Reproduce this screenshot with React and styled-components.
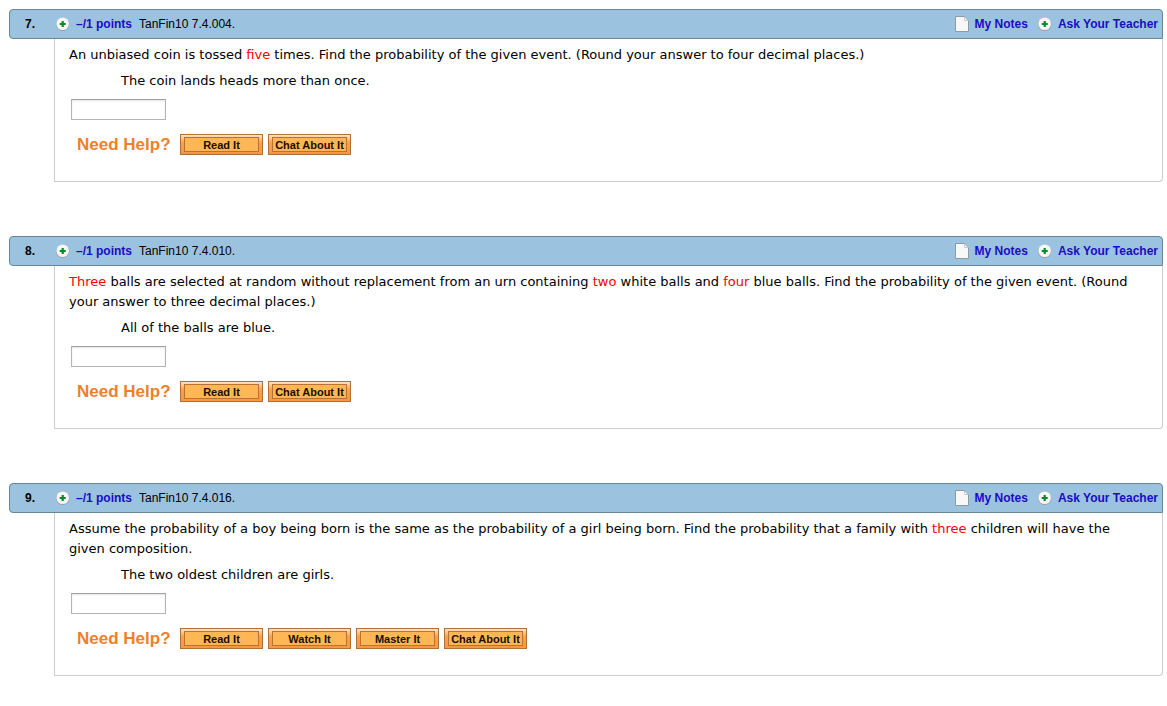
import React from "react";
import styled, { createGlobalStyle } from "styled-components";

const Value = styled.span`
  color: #f00;
`;

const questions = [
  {
    number: 7,
    code: "TanFin10 7.4.004.",
    text: (
      <>
        An unbiased coin is tossed <Value>five</Value> times. Find the
        probability of the given event. (Round your answer to four decimal
        places.)
      </>
    ),
    event: "The coin lands heads more than once.",
    help: ["Read It", "Chat About It"],
  },
  {
    number: 8,
    code: "TanFin10 7.4.010.",
    text: (
      <>
        <Value>Three</Value> balls are selected at random without replacement
        from an urn containing <Value>two</Value> white balls and{" "}
        <Value>four</Value> blue balls. Find the probability of the given event.
        (Round your answer to three decimal places.)
      </>
    ),
    event: "All of the balls are blue.",
    help: ["Read It", "Chat About It"],
  },
  {
    number: 9,
    code: "TanFin10 7.4.016.",
    text: (
      <>
        Assume the probability of a boy being born is the same as the
        probability of a girl being born. Find the probability that a family
        with <Value>three</Value> children will have the given composition.
      </>
    ),
    event: "The two oldest children are girls.",
    help: ["Read It", "Watch It", "Master It", "Chat About It"],
  },
];

function PlusIcon() {
  return (
    <svg width="14" height="14" viewBox="0 0 14 14" aria-hidden="true">
      <circle cx="6.7" cy="7.3" r="6.6" fill="#8fa0ac" />
      <circle cx="6.7" cy="6.8" r="6.3" fill="#f6f6f4" />
      <path
        d="M5.6 4h2.2v1.9h1.9v2.2H7.8V10H5.6V8.1H3.7V5.9h1.9z"
        fill="#078a28"
      />
    </svg>
  );
}

function NoteIcon() {
  return (
    <svg width="14" height="16" viewBox="0 0 14 16" aria-hidden="true">
      <path
        d="M0.5 0.5h9l4 4v11h-13z"
        fill="#f8f8f8"
        stroke="#8b9ba6"
        strokeWidth="1"
      />
      <path d="M9.5 1v3.5h3.5z" fill="#fff" stroke="#c4cace" strokeWidth="1" />
    </svg>
  );
}

function Question({ number, code, text, event, help }) {
  const answerId = `answer-${number}`;
  return (
    <Card>
      <Header>
        <QuestionNumber>{number}.</QuestionNumber>
        <Points href="#points">
          <PlusIcon />
          –/1 points
        </Points>
        <span>{code}</span>
        <Links>
          <HeaderLink href="#notes">
            <NoteIcon />
            My Notes
          </HeaderLink>
          <HeaderLink href="#ask">
            <PlusIcon />
            Ask Your Teacher
          </HeaderLink>
        </Links>
      </Header>
      <Body>
        <Text>{text}</Text>
        <EventLabel htmlFor={answerId}>{event}</EventLabel>
        <Answer id={answerId} type="text" />
        <Help>
          <HelpTitle>Need Help?</HelpTitle>
          {help.map((name) => (
            <HelpButton key={name} type="button">
              <HelpButtonText>{name}</HelpButtonText>
            </HelpButton>
          ))}
        </Help>
      </Body>
    </Card>
  );
}

export default function App() {
  return (
    <>
      <GlobalStyle />
      <Page>
        {questions.map((question) => (
          <Question key={question.number} {...question} />
        ))}
      </Page>
    </>
  );
}

const GlobalStyle = createGlobalStyle`
  * {
    box-sizing: border-box;
  }

  body {
    margin: 0;
    background-color: #fff;
    color: #000;
    font-family: Verdana, "DejaVu Sans", sans-serif;
    font-size: 13px;
  }
`;

const Page = styled.main`
  display: flex;
  flex-direction: column;
  gap: 54px;
  padding: 9px 4px 30px 9px;
`;

const Card = styled.section``;

const Header = styled.header`
  display: flex;
  align-items: center;
  height: 30px;
  padding: 0 4px 0 15px;
  border: 1px solid #668796;
  border-radius: 4px 4px 0 4px;
  background-color: #9bc2de;
  font-family: "Liberation Sans", Arial, sans-serif;
  font-size: 12px;
  line-height: 16px;
`;

const QuestionNumber = styled.span`
  width: 31px;
  font-weight: 700;
`;

const HeaderLink = styled.a`
  display: flex;
  align-items: center;
  gap: 6px;
  color: #1a0dc4;
  font-weight: 700;
  text-decoration: none;
`;

const Points = styled(HeaderLink)`
  margin-right: 7px;
`;

const Links = styled.nav`
  display: flex;
  gap: 10px;
  margin-left: auto;
`;

const Body = styled.div`
  margin-left: 45px;
  padding: 6px 14px 26px;
  border: 1px solid #ccc;
  border-top: none;
  border-radius: 0 0 4px 0;
  line-height: 20px;
`;

const Text = styled.p`
  margin: 0 0 6px;
`;

const EventLabel = styled.label`
  display: block;
  margin: 0 0 8px 52px;
`;

const Answer = styled.input`
  display: block;
  width: 95px;
  height: 21px;
  margin: 0 0 14px 2px;
  padding: 0 4px;
  border: 1px solid #b4b4b4;
  border-top-color: #a0a0a0;
  box-shadow: inset 0 1px 2px #e4e4e4;
  background-color: #fff;
  font-size: 13px;
`;

const Help = styled.div`
  display: flex;
  align-items: center;
  gap: 5px;
  padding-left: 8px;
`;

const HelpTitle = styled.span`
  width: 98px;
  color: #ee7f2d;
  font-family: "Liberation Sans", Arial, sans-serif;
  font-size: 17px;
  font-weight: 700;
`;

const HelpButton = styled.button`
  width: 83px;
  height: 21px;
  padding: 2px 3px;
  border: 1px solid #b06f34;
  background-image: linear-gradient(to bottom, #fde3cb, #fd9f4c 40%, #fb963f);
  cursor: pointer;
`;

const HelpButtonText = styled.span`
  display: block;
  height: 15px;
  border: 1px solid #b9722f;
  background-color: #ffb655;
  color: #1a0d00;
  font-family: "Liberation Sans", Arial, sans-serif;
  font-size: 11px;
  font-weight: 700;
  line-height: 15px;
  white-space: nowrap;
`;
